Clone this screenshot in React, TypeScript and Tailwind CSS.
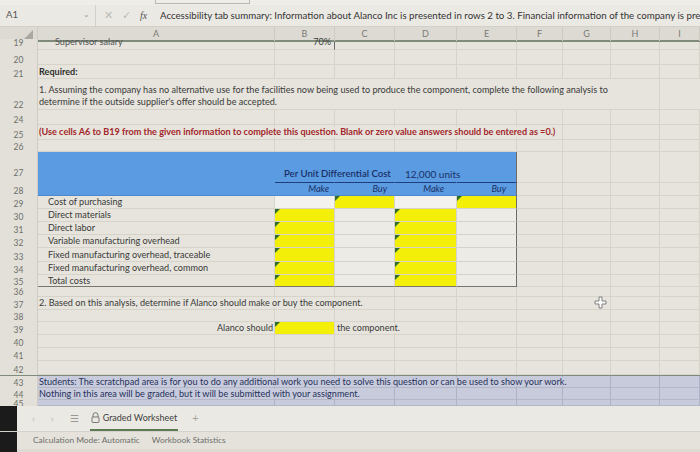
import type { ReactNode } from "react";

const GRID = "grid grid-cols-[38px_237px_60px_60px_62px_60px_46px_48px_49px_1fr]";
const FONT = { fontFamily: "Lato, 'Open Sans', sans-serif" };

type Cell = { c?: ReactNode; cls?: string; tri?: boolean; r?: string; b?: string };

function Tri() {
  return (
    <span className="absolute left-0 top-0 w-0 h-0 border-t-[5px] border-r-[5px] border-t-[#2f6d2c] border-r-transparent" />
  );
}

function Row({
  num,
  h,
  cells = {},
  numCls = "",
}: {
  num: string;
  h: string;
  cells?: Record<number, Cell>;
  numCls?: string;
}) {
  return (
    <div className={`${GRID} ${h}`}>
      <div
        className={`flex items-end justify-center pb-[1px] text-[8.5px] leading-none text-[#6f6f6a] bg-[#e2e0d9] border-r border-[#cfccc4] overflow-hidden ${numCls}`}
      >
        {num}
      </div>
      {Array.from({ length: 9 }).map((_, i) => {
        const cell = cells[i] ?? {};
        return (
          <div
            key={i}
            className={`relative flex items-center border-r border-b ${cell.r ?? "border-r-[#d6d3cb]"} ${cell.b ?? "border-b-[#d6d3cb]"} text-[9.1px] leading-none text-[#3a3a38] whitespace-nowrap ${cell.cls ?? ""}`}
          >
            {cell.tri && <Tri />}
            {cell.c}
          </div>
        );
      })}
    </div>
  );
}

function Txt({ children, cls = "" }: { children: ReactNode; cls?: string }) {
  return <span className={`relative z-10 ${cls}`}>{children}</span>;
}

const scratch: Cell = { cls: "bg-[#c8cbdb]", r: "border-r-[#aeb2c4]", b: "border-b-[#b3b7c8]" };

function scratchRow(text?: string): Record<number, Cell> {
  const cells: Record<number, Cell> = {};
  for (let i = 0; i < 9; i++) cells[i] = scratch;
  if (text) {
    cells[0] = {
      ...scratch,
      c: <Txt cls="pl-[1px] text-[#26315c] bg-[#c8cbdb]">{text}</Txt>,
    };
  }
  return cells;
}

export default function App() {
  const blueR = "border-r-[#5a9be2]";
  const blueB = "border-b-[#5a9be2]";
  const edge = "border-r-[#6d6d6a]";
  const blue = "bg-[#5a9be2]";
  const white = "bg-[#ecebe6]";
  const yellow = "bg-[#f3ef08]";
  const navy = "text-[#1b3166]";

  const tableRow = (label: string, bottom?: string): Record<number, Cell> => ({
    0: { c: <Txt cls="pl-[10px]">{label}</Txt>, b: bottom },
    1: { cls: yellow, tri: true, b: bottom },
    2: { cls: white, b: bottom },
    3: { cls: yellow, tri: true, b: bottom },
    4: { cls: white, r: edge, b: bottom },
  });

  return (
    <div className="w-[700px] h-[452px] overflow-hidden bg-[#e6e4dd] relative" style={FONT}>
      {/* formula bar */}
      <div className="h-[5px] bg-[#efede8] flex">
        <div className="ml-[155px] w-[95px] h-[4px] border-b border-x border-[#b9b7b0]" />
      </div>
      <div className="h-[22px] flex items-center bg-[#ebe9e4] border-b border-[#d3d0c8] overflow-hidden">
        <div className="w-[96px] shrink-0 h-full flex items-center justify-between pl-[6px] pr-[5px] border-r border-[#d3d0c8]">
          <span className="text-[9.5px] text-[#555]">A1</span>
          <span className="text-[8px] text-[#999] -mt-[4px]">⌄</span>
        </div>
        <div className="w-[60px] shrink-0 flex items-center gap-[9px] pl-[8px] text-[#bdbbb5]">
          <span className="text-[11px]">✕</span>
          <span className="text-[11px]">✓</span>
          <span className="text-[10px] italic text-[#555]" style={{ fontFamily: "'Liberation Serif', serif" }}>
            fx
          </span>
        </div>
        <div className="pl-[4px] text-[9.7px] whitespace-nowrap text-[#333]">
          Accessibility tab summary: Information about Alanco Inc is presented in rows 2 to 3. Financial information of the company is presented in rows 5 to 19
        </div>
      </div>

      {/* column header */}
      <div className={`${GRID} h-[15px] bg-[#dcdad3] border-b-2 border-[#7f8b7b]`}>
        <div className="relative border-r border-[#cfccc4]">
          <span className="absolute right-[4px] bottom-[2px] w-0 h-0 border-b-[9px] border-l-[9px] border-b-[#a9a7a0] border-l-transparent" />
        </div>
        {["A", "B", "C", "D", "E", "F", "G", "H", "I"].map((l) => (
          <div
            key={l}
            className="flex items-center justify-center text-[9px] text-[#7a7a76] border-r border-[#cdcac2]"
          >
            {l}
          </div>
        ))}
      </div>

      <div className="relative">
        <Row
          num="19"
          h="h-[8px]"
          numCls="items-start -mt-[3px]"
          cells={{
            0: { c: <Txt cls="pl-[17px] -mt-[5px] text-[#555]">Supervisor salary</Txt>, cls: "items-start" },
            1: { c: <Txt cls="ml-auto pr-[3px] -mt-[5px]">70%</Txt>, cls: "items-start", r: "border-r-[#666]" },
          }}
        />
        <Row num="20" h="h-[15px]" />
        <Row num="21" h="h-[14px]" cells={{ 0: { c: <Txt cls="pl-[1px] font-bold text-[#2d2d2b]">Required:</Txt> } }} />
        <div className={`${GRID} h-[31px]`}>
          <div className="flex items-end justify-center pb-[1px] text-[8.5px] leading-none text-[#6f6f6a] bg-[#e2e0d9] border-r border-[#cfccc4]">
            22
          </div>
          <div className="col-span-8 flex flex-col justify-end pb-[3px] pl-[1px] gap-[3px] border-b border-r border-[#d6d3cb] text-[9.1px] leading-none text-[#3a3a38] whitespace-nowrap">
            <span>
              1. Assuming the company has no alternative use for the facilities now being used to produce the component, complete the following analysis to
            </span>
            <span>determine if the outside supplier's offer should be accepted.</span>
          </div>
          <div className="border-b border-[#d6d3cb]" />
        </div>
        <Row num="24" h="h-[15px]" />
        <Row
          num="25"
          h="h-[15px]"
          cells={{
            0: {
              c: (
                <Txt cls="pl-[1px] font-bold text-[#a3262a] bg-[#e6e4dd]">
                  (Use cells A6 to B19 from the given information to complete this question. Blank or zero value answers should be entered as =0.)
                </Txt>
              ),
            },
          }}
        />
        <Row num="26" h="h-[12px]" />

        {/* blue header */}
        <Row
          num="27"
          h="h-[31px]"
          numCls="pb-[6px]"
          cells={{
            0: { cls: blue, r: blueR, b: blueB },
            1: {
              cls: blue,
              r: blueR,
              b: "border-b-[#1f3f7c]",
              c: (
                <span
                  className={`absolute z-10 bottom-[3px] left-[9px] font-semibold text-[9.6px] ${navy}`}
                >
                  Per Unit Differential Cost
                </span>
              ),
            },
            2: { cls: blue, r: blueR, b: "border-b-[#1f3f7c]" },
            3: {
              cls: blue,
              r: blueR,
              b: "border-b-[#1f3f7c]",
              c: <span className={`absolute z-10 bottom-[3px] left-[10px] text-[10px] ${navy}`}>12,000 units</span>,
            },
            4: { cls: blue, r: edge, b: "border-b-[#1f3f7c]" },
          }}
        />
        <Row
          num="28"
          h="h-[13px]"
          cells={{
            0: { cls: blue, r: blueR, b: "border-b-[#4f89c9]" },
            1: { cls: `${blue} justify-end pr-[5px]`, r: blueR, b: "border-b-[#4f89c9]", c: <Txt cls={`italic ${navy}`}>Make</Txt> },
            2: { cls: `${blue} justify-end pr-[7px]`, r: blueR, b: "border-b-[#4f89c9]", c: <Txt cls={`italic ${navy}`}>Buy</Txt> },
            3: { cls: `${blue} justify-end pr-[12px]`, r: blueR, b: "border-b-[#4f89c9]", c: <Txt cls={`italic ${navy}`}>Make</Txt> },
            4: { cls: `${blue} justify-end pr-[10px]`, r: edge, b: "border-b-[#4f89c9]", c: <Txt cls={`italic ${navy}`}>Buy</Txt> },
          }}
        />
        <Row
          num="29"
          h="h-[13px]"
          cells={{
            0: { c: <Txt cls="pl-[10px]">Cost of purchasing</Txt> },
            1: { cls: "bg-[#f3f2ee]" },
            2: { cls: yellow, tri: true },
            3: { cls: "bg-[#f3f2ee]" },
            4: { cls: yellow, tri: true, r: edge },
          }}
        />
        <Row num="30" h="h-[13px]" cells={tableRow("Direct materials")} />
        <Row num="31" h="h-[13px]" cells={tableRow("Direct labor")} />
        <Row num="32" h="h-[13px]" cells={tableRow("Variable manufacturing overhead")} />
        <Row num="33" h="h-[14px]" cells={tableRow("Fixed manufacturing overhead, traceable")} />
        <Row num="34" h="h-[13px]" cells={tableRow("Fixed manufacturing overhead, common")} />
        <Row num="35" h="h-[12px]" cells={tableRow("Total costs", "border-b-[#77776f]")} />
        <Row num="36" h="h-[10px]" />
        <Row
          num="37"
          h="h-[13px]"
          cells={{
            0: {
              c: (
                <Txt cls="pl-[1px] bg-[#e6e4dd]">
                  2. Based on this analysis, determine if Alanco should make or buy the component.
                </Txt>
              ),
            },
          }}
        />
        <Row num="38" h="h-[12px]" />
        <Row
          num="39"
          h="h-[13px]"
          cells={{
            0: { cls: "justify-end", c: <Txt cls="pr-[1px]">Alanco should</Txt> },
            1: { cls: yellow, tri: true },
            2: { c: <Txt cls="pl-[2px] bg-[#e6e4dd]">the component.</Txt> },
          }}
        />
        <Row num="40" h="h-[13px]" />
        <Row num="41" h="h-[13px]" />
        <Row num="42" h="h-[14px]" />
        <div className="border-t border-[#7f8b7b]">
          <Row
            num="43"
            h="h-[12px]"
            cells={scratchRow(
              "Students: The scratchpad area is for you to do any additional work you need to solve this question or can be used to show your work."
            )}
          />
          <Row
            num="44"
            h="h-[12px]"
            cells={scratchRow("Nothing in this area will be graded, but it will be submitted with your assignment.")}
          />
          <Row num="45" h="h-[6px]" numCls="items-start text-[7px]" cells={scratchRow()} />
        </div>

        {/* move cursor */}
        <svg className="absolute left-[594px] top-[254px] w-[13px] h-[13px]" viewBox="0 0 13 13">
          <path
            d="M5 1h3v4h4v3H8v4H5V8H1V5h4z"
            fill="#fafafa"
            stroke="#777"
            strokeWidth="0.9"
            strokeLinejoin="round"
          />
        </svg>
      </div>

      {/* sheet tabs */}
      <div className="h-[25px] flex items-stretch bg-[#ebe9e3]">
        <div className="w-[17px] bg-[#1b1b1b]" />
        <div className="flex items-center pl-[15px] text-[#b8b6b0] text-[10px] gap-[16px]">
          <span>‹</span>
          <span>›</span>
          <span className="text-[#9a9892]">☰</span>
        </div>
        <div className="ml-[11px] flex items-center gap-[3px] border-b-2 border-[#5c7a52] px-[1px]">
          <svg className="w-[9px] h-[11px]" viewBox="0 0 9 11" fill="none" stroke="#6a6a66" strokeWidth="0.9">
            <path d="M2 5V3.2a2.5 2.5 0 0 1 5 0V5" />
            <rect x="1" y="5" width="7" height="5.5" rx="0.8" />
          </svg>
          <span className="text-[9px] text-[#3e3e3c]">Graded Worksheet</span>
        </div>
        <span className="ml-[14px] self-center text-[11px] text-[#a5a39d]">+</span>
      </div>
      <div className="h-[18px] flex items-stretch bg-[#e4e2db] border-t border-[#d4d2ca]">
        <div className="w-[17px] bg-[#1b1b1b]" />
        <div className="flex items-center pl-[16px] gap-[12px] text-[8.4px] text-[#6f6f6b]">
          <span>Calculation Mode: Automatic</span>
          <span>Workbook Statistics</span>
        </div>
      </div>
      <div className="h-[20px] flex bg-[#dcdad3]">
        <div className="w-[17px] bg-[#1b1b1b]" />
      </div>
    </div>
  );
}
